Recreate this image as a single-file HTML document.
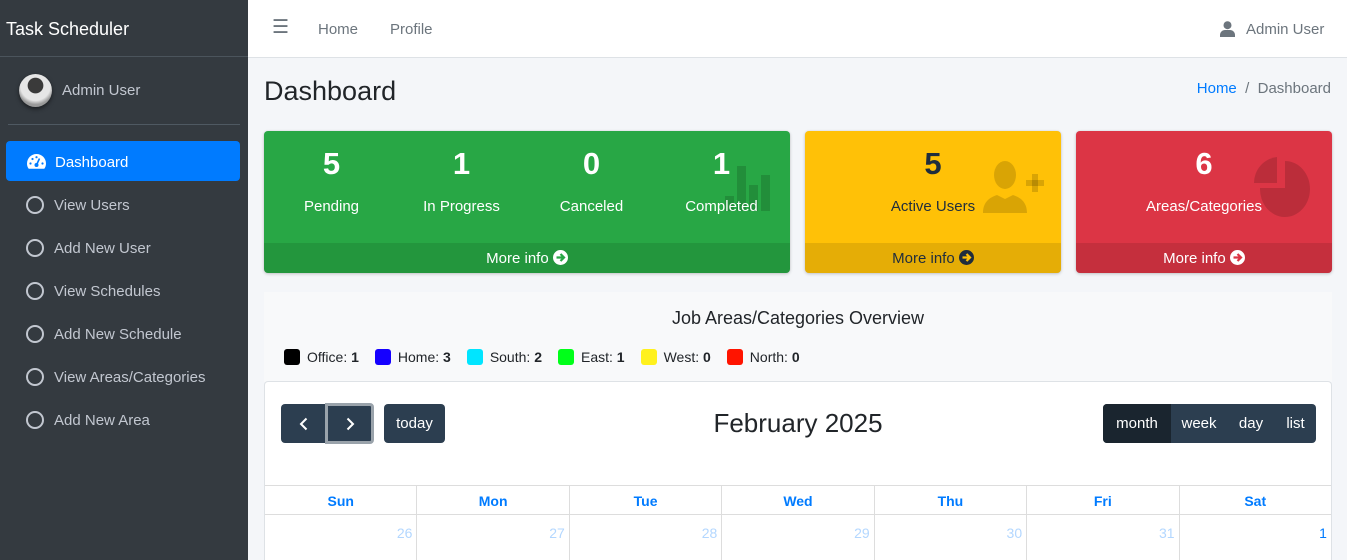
<!DOCTYPE html>
<html style="overflow:hidden;height:560px"><head><meta charset="utf-8"><style>
*{box-sizing:border-box;margin:0;padding:0}
body{width:1347px;height:560px;overflow:hidden;background:#f4f6f9;font-family:"Liberation Sans",sans-serif;color:#212529;position:relative;font-size:15px}
.side{position:absolute;left:0;top:0;width:248px;height:560px;background:#343a40;color:#c2c7d0}
.brand{height:57px;border-bottom:1px solid #4b545c;color:#fff;font-size:18px;padding:19px 0 0 6px;font-weight:300}
.user{margin:0 8px;height:68px;border-bottom:1px solid #4f5962;display:flex;align-items:center;padding-left:11px}
.av{width:33px;height:33px;border-radius:50%;background:radial-gradient(circle at 50% 35%,#3a3a3a 0 28%,#e6e6e6 30% 55%,#999 70%);box-shadow:0 2px 4px rgba(0,0,0,.5)}
.user span{margin-left:10px;font-size:15px;color:#c2c7d0}
.nav{padding-top:16px}
.nav div{margin:0 8px 3px 6px;height:40px;display:flex;align-items:center;padding-left:20px;font-size:15px;border-radius:4px;padding-top:2px}
.nav div.act{background:#007bff;color:#fff}
.circ{width:18px;height:18px;border:2px solid #c2c7d0;border-radius:50%;margin-right:10px}
.top{position:absolute;left:248px;top:0;right:0;height:58px;background:#fff;border-bottom:1px solid #dee2e6;color:#6c757d;font-size:15px}
.top span{position:absolute;top:21px}
h1{position:absolute;left:264px;top:76px;font-size:27px;font-weight:400}
.bc{position:absolute;right:16px;top:80px;font-size:15px;color:#6c757d}
.box{position:absolute;top:131px;height:142px;border-radius:4px;overflow:hidden;box-shadow:0 0 1px rgba(0,0,0,.13),0 1px 3px rgba(0,0,0,.2)}
.box .n{position:absolute;top:15px;font-size:31px;font-weight:bold;text-align:center}
.box .l{position:absolute;top:67px;font-size:15px;text-align:center}
.foot{position:absolute;left:0;right:0;bottom:0;height:30px;background:rgba(0,0,0,.1);text-align:center;font-size:15px;padding-top:7px}
.ar{display:inline-block;width:15px;height:15px;border-radius:50%;vertical-align:-2px;position:relative}
.sec{position:absolute;left:264px;top:292px;width:1068px;height:90px;background:#f8f9fa}
.sec h3{text-align:center;font-size:18px;font-weight:400;margin-top:16px}
.leg{position:absolute;left:20px;top:57px;font-size:14px;display:flex}
.leg i{display:inline-block;width:16px;height:16px;border-radius:3px;margin-right:7px;vertical-align:-3px}
.leg span{margin-right:16px}
.cal{position:absolute;left:264px;top:381px;width:1068px;height:179px;background:#fff;border:1px solid #dee2e6;border-bottom:none;border-radius:4px 4px 0 0;overflow:hidden}
.btn{position:absolute;background:#2c3e50;color:#fff;font-size:15px;height:39px;display:flex;align-items:center;justify-content:center}
.grid{position:absolute;left:0;top:103px;width:1066px;border-top:1px solid #ddd;display:flex}
.grid div{flex:1;border-right:1px solid #ddd;height:100px;position:relative}
.grid div:last-child{border-right:none}
.grid b{display:block;height:29px;border-bottom:1px solid #ddd;text-align:center;color:#007bff;font-size:14px;padding-top:7px}
.grid span{position:absolute;right:4px;top:39px;font-size:14px;color:#b3d7ff}
</style></head><body>
<div class="side">
<div class="brand">Task Scheduler</div>
<div class="user"><div class="av"></div><span>Admin User</span></div>
<div class="nav">
<div class="act"><svg width="21" height="18" viewBox="0 0 21 18" style="margin-right:8px"><path d="M10.5 1A9.5 9.5 0 0 0 1 10.5c0 2 .6 3.8 1.7 5.3h15.6A9.4 9.4 0 0 0 20 10.5 9.5 9.5 0 0 0 10.5 1z" fill="#fff"/><circle cx="10.5" cy="12" r="2" fill="#007bff"/><path d="M10.5 12L13.5 5.5" stroke="#007bff" stroke-width="1.6"/><circle cx="4.5" cy="10.5" r="1.1" fill="#007bff"/><circle cx="6.5" cy="6" r="1.1" fill="#007bff"/><circle cx="10.5" cy="4.2" r="1.1" fill="#007bff"/><circle cx="16.5" cy="10.5" r="1.1" fill="#007bff"/></svg>Dashboard</div>
<div><span class="circ"></span>View Users</div>
<div><span class="circ"></span>Add New User</div>
<div><span class="circ"></span>View Schedules</div>
<div><span class="circ"></span>Add New Schedule</div>
<div><span class="circ"></span>View Areas/Categories</div>
<div><span class="circ"></span>Add New Area</div>
</div></div>
<div class="top">
<span style="left:24px;top:16px;font-size:19px">&#9776;</span>
<span style="left:70px">Home</span><span style="left:142px">Profile</span>
<svg style="position:absolute;left:972px;top:21px" width="15" height="16" viewBox="0 0 15 16"><circle cx="7.5" cy="4.2" r="4" fill="#6c757d"/><path d="M0 16v-2c0-3 2.5-5 5-5h5c2.5 0 5 2 5 5v2z" fill="#6c757d"/></svg>
<span style="left:998px">Admin User</span>
</div>
<h1>Dashboard</h1>
<div class="bc"><span style="color:#007bff">Home</span> &nbsp;/&nbsp; Dashboard</div>

<div class="box" style="left:264px;width:526px;background:#28a745;color:#fff">
<svg style="position:absolute;left:461px;top:30px" width="52" height="50"><g fill="rgba(0,0,0,.15)"><rect x="0" y="35" width="9" height="15"/><rect x="12" y="5" width="9" height="45"/><rect x="24" y="24" width="9" height="26"/><rect x="36" y="14" width="9" height="36"/></g></svg>
<div class="n" style="left:0;width:135px">5</div><div class="l" style="left:0;width:135px">Pending</div>
<div class="n" style="left:130px;width:135px">1</div><div class="l" style="left:130px;width:135px">In Progress</div>
<div class="n" style="left:260px;width:135px">0</div><div class="l" style="left:260px;width:135px">Canceled</div>
<div class="n" style="left:390px;width:135px">1</div><div class="l" style="left:390px;width:135px">Completed</div>
<div class="foot">More info <span class="ar" style="background:#fff"><svg width="15" height="15" style="position:absolute;left:0;top:0"><path d="M3.5 7.5h7M7.5 4l3.5 3.5L7.5 11" stroke="#28a745" stroke-width="2.2" fill="none"/></svg></span></div>
</div>

<div class="box" style="left:805px;width:256px;background:#ffc107;color:#1f2d3d">
<svg style="position:absolute;left:178px;top:28px" width="64" height="56"><g fill="rgba(0,0,0,.15)"><ellipse cx="22" cy="16" rx="11" ry="14"/><path d="M0 54c0-12 8-16 14-18l8 4 8-4c6 2 14 6 14 18z"/><rect x="49" y="15" width="6" height="18"/><rect x="43" y="21" width="18" height="6"/></g></svg>
<div class="n" style="left:0;width:256px">5</div><div class="l" style="left:0;width:256px">Active Users</div>
<div class="foot">More info <span class="ar" style="background:#1f2d3d"><svg width="15" height="15" style="position:absolute;left:0;top:0"><path d="M3.5 7.5h7M7.5 4l3.5 3.5L7.5 11" stroke="#ffc107" stroke-width="2.2" fill="none"/></svg></span></div>
</div>

<div class="box" style="left:1076px;width:256px;background:#dc3545;color:#fff">
<svg style="position:absolute;left:178px;top:25px" width="64" height="62"><g fill="rgba(0,0,0,.15)"><path d="M28 5V32H3A25 28 0 1 0 28 5z" transform="translate(3,0)"/><path d="M0 27A26 26 0 0 1 23 1V27z"/></g></svg>
<div class="n" style="left:0;width:256px">6</div><div class="l" style="left:0;width:256px">Areas/Categories</div>
<div class="foot">More info <span class="ar" style="background:#fff"><svg width="15" height="15" style="position:absolute;left:0;top:0"><path d="M3.5 7.5h7M7.5 4l3.5 3.5L7.5 11" stroke="#dc3545" stroke-width="2.2" fill="none"/></svg></span></div>
</div>

<div class="sec"><h3>Job Areas/Categories Overview</h3>
<div class="leg"><span><i style="background:#000"></i>Office: <b>1</b></span><span><i style="background:#1500ff"></i>Home: <b>3</b></span><span><i style="background:#00e5ff"></i>South: <b>2</b></span><span><i style="background:#00ff19"></i>East: <b>1</b></span><span><i style="background:#fff11d"></i>West: <b>0</b></span><span><i style="background:#ff1400"></i>North: <b>0</b></span></div>
</div>

<div class="cal">
<div class="btn" style="left:16px;top:22px;width:45px;border-radius:4px 0 0 4px"><svg width="10" height="14"><path d="M7.5 1.5L2 7l5.5 5.5" stroke="#fff" stroke-width="2" fill="none"/></svg></div>
<div class="btn" style="left:60px;top:21px;width:49px;height:41px;border-radius:0 4px 4px 0;border:3px solid #9aa3ab"><svg width="10" height="14"><path d="M2.5 1.5L8 7l-5.5 5.5" stroke="#fff" stroke-width="2" fill="none"/></svg></div>
<div class="btn" style="left:119px;top:22px;width:61px;border-radius:4px">today</div>
<div style="position:absolute;left:0;width:1066px;top:26px;text-align:center;font-size:26px">February 2025</div>
<div class="btn" style="left:838px;top:22px;width:213px;border-radius:4px;justify-content:flex-start">
<span style="background:#1a252f;height:39px;width:68px;display:flex;align-items:center;justify-content:center;border-radius:4px 0 0 4px">month</span>
<span style="width:56px;text-align:center">week</span><span style="width:48px;text-align:center">day</span><span style="width:41px;text-align:center">list</span></div>
<div class="grid">
<div><b>Sun</b><span>26</span></div><div><b>Mon</b><span>27</span></div><div><b>Tue</b><span>28</span></div><div><b>Wed</b><span>29</span></div><div><b>Thu</b><span>30</span></div><div><b>Fri</b><span>31</span></div><div><b>Sat</b><span style="color:#007bff">1</span></div>
</div>
</div>
</body></html>
